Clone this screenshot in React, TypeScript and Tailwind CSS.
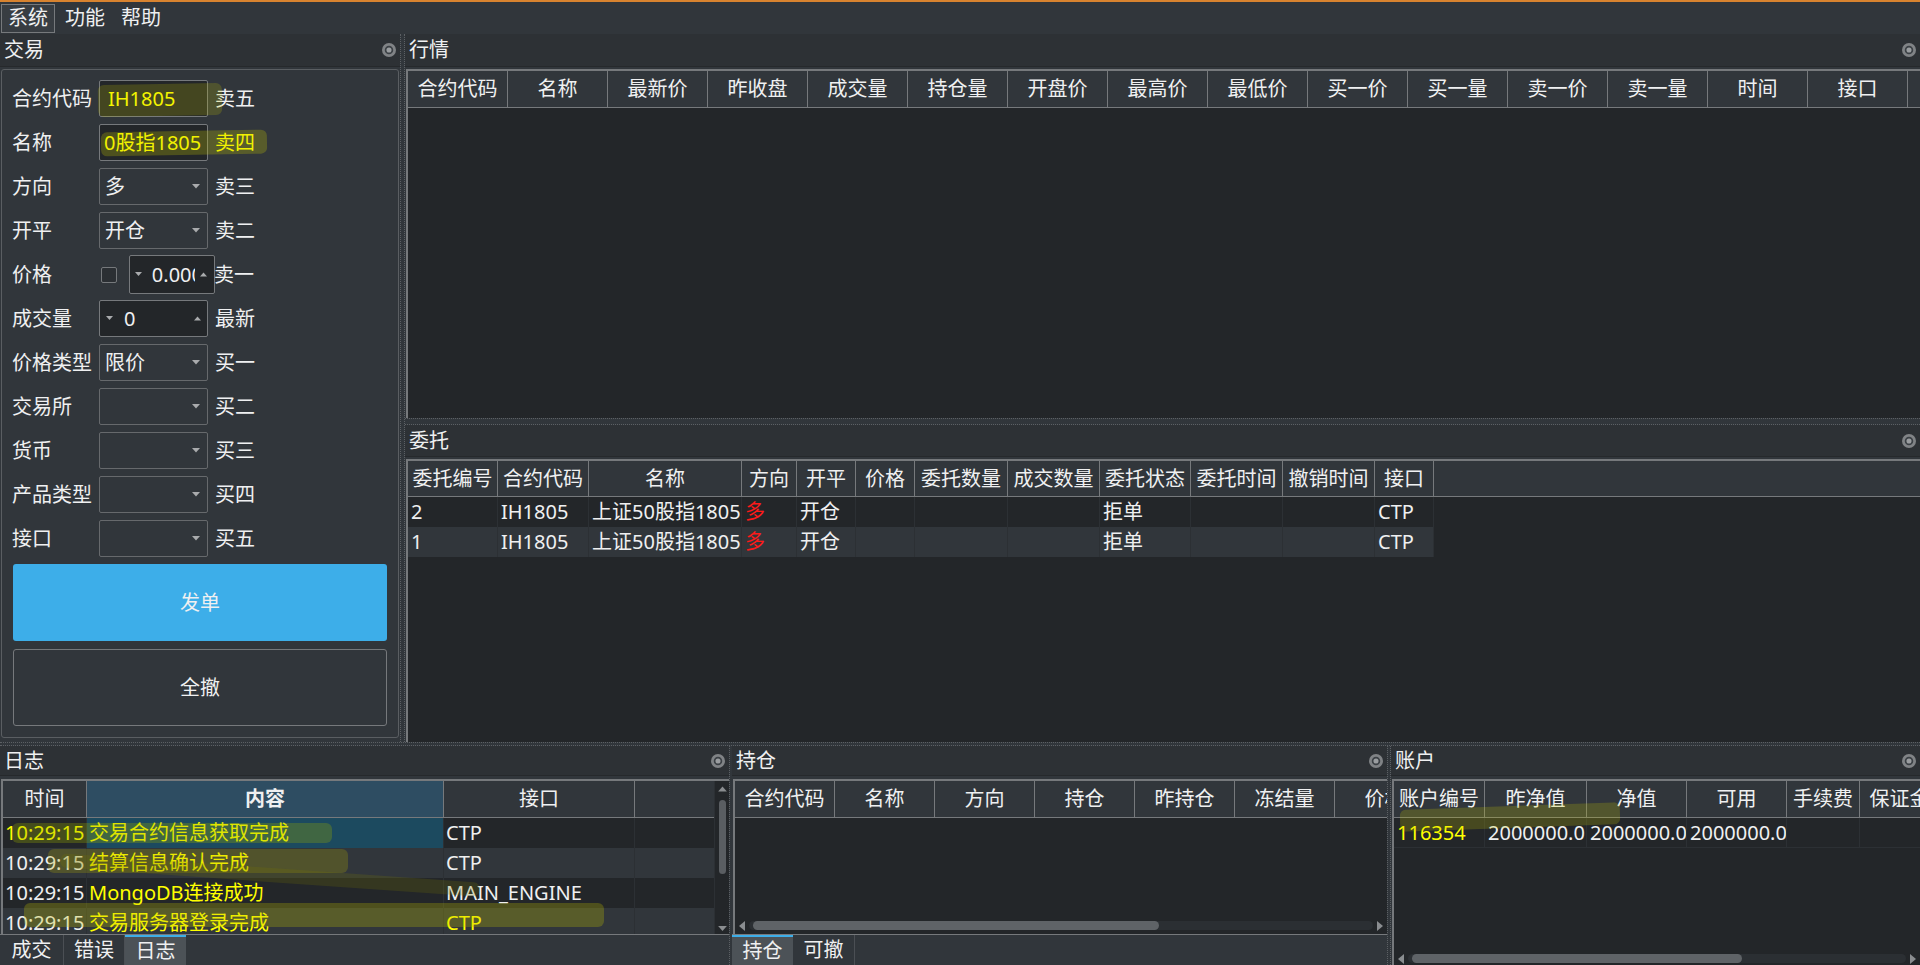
import React from 'react';

const FONT = "font-['Noto_Sans','Noto_Sans_CJK_SC',sans-serif]";

function CloseIcon() {
  return (
    <svg width="14" height="14" viewBox="0 0 14 14" className="shrink-0">
      <circle cx="7" cy="7" r="7" fill="#808386" />
      <circle cx="7" cy="7" r="3.4" fill="#9a9da0" stroke="#3b4045" strokeWidth="1.7" />
    </svg>
  );
}

function Tri({ up = false, size = 8, color = '#a9abad' }: { up?: boolean; size?: number; color?: string }) {
  return (
    <svg width={size} height={size / 2 + 1} viewBox="0 0 8 5" className="shrink-0">
      {up ? <path d="M0 5 L4 0.5 L8 5 Z" fill={color} /> : <path d="M0 0 L8 0 L4 4.5 Z" fill={color} />}
    </svg>
  );
}

function DockTitle({ title, h = 'h-[33px]' }: { title: string; h?: string }) {
  return (
    <div className={`${h} shrink-0 flex items-center justify-between pl-[4px] pr-[4px] bg-[#2d3135] border-b border-[#26292c]`}>
      <span className="leading-none">{title}</span>
      <CloseIcon />
    </div>
  );
}

function HeaderRow({ cols, h = 'h-[38px]', active }: { cols: { t: string; w: number }[]; h?: string; active?: number }) {
  return (
    <div className={`${h} shrink-0 flex bg-[#31363b] border-b border-[#76797c]`}>
      {cols.map((c, i) => (
        <div
          key={i}
          style={{ width: c.w }}
          className={`shrink-0 flex items-center justify-center border-r border-[#76797c] whitespace-nowrap overflow-hidden leading-none ${
            active === i ? 'bg-[#2e4d62] font-bold' : ''
          }`}
        >
          {c.t}
        </div>
      ))}
      <div className="flex-1" />
    </div>
  );
}

function Combo({ value = '' }: { value?: string }) {
  return (
    <div className="w-[109px] h-[37px] flex items-center justify-between pl-[5px] pr-[7px] border border-[#66696c] rounded-[2px] bg-[#31363b]">
      <span className="leading-none">{value}</span>
      <Tri />
    </div>
  );
}

const marketCols = ['合约代码', '名称', '最新价', '昨收盘', '成交量', '持仓量', '开盘价', '最高价', '最低价', '买一价', '买一量', '卖一价', '卖一量', '时间', '接口'].map(t => ({ t, w: 100 }));

const orderWidths = [90, 91, 153, 55, 59, 59, 93, 92, 91, 92, 92, 59];
const orderCols = ['委托编号', '合约代码', '名称', '方向', '开平', '价格', '委托数量', '成交数量', '委托状态', '委托时间', '撤销时间', '接口'].map((t, i) => ({ t, w: orderWidths[i] }));
const orders = [
  ['2', 'IH1805', '上证50股指1805', '多', '开仓', '', '', '', '拒单', '', '', 'CTP'],
  ['1', 'IH1805', '上证50股指1805', '多', '开仓', '', '', '', '拒单', '', '', 'CTP'],
];

const logWidths = [84, 357, 191];
const logCols = [
  { t: '时间', w: 84 },
  { t: '内容', w: 357 },
  { t: '接口', w: 191 },
];
const logs = [
  { time: '10:29:15', msg: '交易合约信息获取完成', gw: 'CTP', timeY: true, gwY: false },
  { time: '10:29:15', msg: '结算信息确认完成', gw: 'CTP', timeY: false, gwY: false },
  { time: '10:29:15', msg: 'MongoDB连接成功', gw: 'MAIN_ENGINE', timeY: false, gwY: false },
  { time: '10:29:15', msg: '交易服务器登录完成', gw: 'CTP', timeY: false, gwY: true },
];

const posCols = ['合约代码', '名称', '方向', '持仓', '昨持仓', '冻结量', '价格'].map(t => ({ t, w: 100 }));

const accWidths = [91, 102, 100, 100, 73, 80];
const accCols = ['账户编号', '昨净值', '净值', '可用', '手续费', '保证金'].map((t, i) => ({ t, w: accWidths[i] }));

const formRows: { label: string; right: string }[] = [
  { label: '合约代码', right: '卖五' },
  { label: '名称', right: '卖四' },
  { label: '方向', right: '卖三' },
  { label: '开平', right: '卖二' },
  { label: '价格', right: '卖一' },
  { label: '成交量', right: '最新' },
  { label: '价格类型', right: '买一' },
  { label: '交易所', right: '买二' },
  { label: '货币', right: '买三' },
  { label: '产品类型', right: '买四' },
  { label: '接口', right: '买五' },
];

function FormField({ i }: { i: number }) {
  if (i === 0)
    return (
      <div className="w-[109px] h-[37px] flex items-center pl-[8px] border border-[#76797c] rounded-[2px] bg-[#232629] text-[#ffff00] leading-none">
        IH1805
      </div>
    );
  if (i === 1)
    return (
      <div className="w-[109px] h-[37px] flex items-center pl-[4px] border border-[#76797c] rounded-[2px] bg-[#232629] text-[#ffff00] leading-none overflow-hidden whitespace-nowrap">
        0股指1805
      </div>
    );
  if (i === 2) return <Combo value="多" />;
  if (i === 3) return <Combo value="开仓" />;
  if (i === 4)
    return (
      <div className="w-[116px] h-[37px] flex items-center">
        <div className="w-[16px] h-[16px] ml-[2px] border border-[#76797c] rounded-[2px] bg-[#2b2f33]" />
        <div className="ml-[12px] w-[87px] h-[39px] flex items-center border border-[#76797c] rounded-[2px] bg-[#232629]">
          <div className="ml-[5px]">
            <Tri size={7} />
          </div>
          <div className="ml-[10px] w-[43px] overflow-hidden whitespace-nowrap leading-none">0.000</div>
          <div className="ml-[5px]">
            <Tri up size={7} />
          </div>
        </div>
      </div>
    );
  if (i === 5)
    return (
      <div className="w-[109px] h-[37px] flex items-center border border-[#76797c] rounded-[2px] bg-[#232629]">
        <div className="ml-[6px]">
          <Tri size={7} />
        </div>
        <div className="ml-[11px] flex-1 leading-none">0</div>
        <div className="mr-[6px]">
          <Tri up size={7} />
        </div>
      </div>
    );
  if (i === 6) return <Combo value="限价" />;
  return <Combo />;
}

function Hl({ cls }: { cls: string }) {
  return <div className={`absolute pointer-events-none rounded-[6px] ${cls}`} />;
}

export default function App() {
  return (
    <div className={`${FONT} relative w-[1920px] h-[965px] overflow-hidden bg-[#31363b] text-[#eff0f1] text-[20px] flex flex-col`}>
      {/* top accent */}
      <div className="h-[2px] shrink-0 bg-[#d8832f]" />

      {/* menu bar */}
      <div className="h-[32px] shrink-0 flex items-center gap-[3px] pl-[1px] bg-[#31363b]">
        <div className="h-[29px] px-[6px] flex items-center border border-[#76797c] bg-[#383d42] leading-none">系统</div>
        <div className="h-[29px] px-[7px] flex items-center leading-none">功能</div>
        <div className="h-[29px] px-[6px] flex items-center leading-none">帮助</div>
      </div>

      {/* main area */}
      <div className="h-[708px] shrink-0 flex">
        {/* trading dock */}
        <div className="w-[400px] shrink-0 flex flex-col">
          <DockTitle title="交易" />
          <div className="mt-[2px] h-[669px] mx-[1px] border border-[#5a5e62] rounded-[3px] flex flex-col pt-[10px] pl-[10px] pr-[11px]">
            <div className="flex flex-col gap-[7px]">
              {formRows.map((r, i) => (
                <div key={i} className="h-[37px] flex items-center">
                  <div className="w-[87px] shrink-0 leading-none whitespace-nowrap">{r.label}</div>
                  <div className="w-[116px] shrink-0">
                    <FormField i={i} />
                  </div>
                  <div className={`leading-none ${i === 4 ? '-ml-[1px]' : ''} ${i === 1 ? 'text-[#ffff00]' : ''}`}>{r.right}</div>
                </div>
              ))}
            </div>
            <div className="mt-[7px] ml-[1px] h-[77px] rounded-[3px] bg-[#3daee9] flex items-center justify-center leading-none">发单</div>
            <div className="mt-[8px] ml-[1px] h-[77px] rounded-[3px] border border-[#76797c] bg-[#31363b] flex items-center justify-center leading-none">全撤</div>
          </div>
        </div>

        {/* vertical splitter */}
        <div className="w-[5px] shrink-0 border-l border-r border-dotted border-[#5c6064]" />

        {/* right column */}
        <div className="flex-1 flex flex-col min-w-0">
          {/* market */}
          <div className="h-[384px] shrink-0 flex flex-col">
            <DockTitle title="行情" />
            <div className="mt-[2px] flex-1 ml-[1px] border-t-2 border-l-2 border-[#76797c] bg-[#232629] overflow-hidden flex flex-col">
              <HeaderRow cols={marketCols} h="h-[37px]" />
            </div>
          </div>
          <div className="h-[7px] shrink-0 border-t border-b border-dotted border-[#5c6064]" />
          {/* orders */}
          <div className="flex-1 flex flex-col min-h-0">
            <DockTitle title="委托" h="h-[32px]" />
            <div className="mt-[2px] flex-1 ml-[1px] border-t-2 border-l-2 border-[#76797c] bg-[#232629] overflow-hidden flex flex-col">
              <HeaderRow cols={orderCols} h="h-[36px]" />
              {orders.map((row, ri) => (
                <div key={ri} className="h-[30px] flex">
                  {row.map((cell, ci) => (
                    <div
                      key={ci}
                      style={{ width: orderWidths[ci] }}
                      className={`shrink-0 flex items-center pl-[3px] whitespace-nowrap overflow-hidden leading-none border-r border-[#2c3034] ${
                        ri === 1 ? 'bg-[#31363b]' : 'bg-[#232629]'
                      } ${ci === 3 ? 'text-[#ff1a1a]' : ''}`}
                    >
                      {cell}
                    </div>
                  ))}
                </div>
              ))}
            </div>
          </div>
        </div>
      </div>

      {/* horizontal splitter */}
      <div className="h-[4px] shrink-0 border-t border-b border-dotted border-[#5c6064]" />

      {/* bottom docks */}
      <div className="flex-1 flex min-h-0">
        {/* log */}
        <div className="w-[729px] shrink-0 flex flex-col">
          <DockTitle title="日志" h="h-[30px]" />
          <div className="mt-[3px] h-[155px] shrink-0 ml-[1px] border-t-2 border-l-2 border-[#76797c] bg-[#232629] overflow-hidden flex">
            <div className="flex-1 flex flex-col min-w-0">
              <HeaderRow cols={logCols} h="h-[37px]" active={1} />
              {logs.map((l, i) => (
                <div key={i} className="h-[30px] shrink-0 flex">
                  {[l.time, l.msg, l.gw].map((cell, ci) => (
                    <div
                      key={ci}
                      style={{ width: logWidths[ci] }}
                      className={`shrink-0 flex items-center pl-[2px] whitespace-nowrap overflow-hidden leading-none border-r border-[#2c3034] ${
                        i === 0 && ci === 1 ? 'bg-[#1c4a5f]' : i % 2 === 1 ? 'bg-[#31363b]' : 'bg-[#232629]'
                      } ${
                        (ci === 0 && l.timeY) || ci === 1 || (ci === 2 && l.gwY) ? 'text-[#ffff00]' : ''
                      }`}
                    >
                      {cell}
                    </div>
                  ))}
                  <div className={`flex-1 ${i % 2 === 1 ? 'bg-[#31363b]' : 'bg-[#232629]'}`} />
                </div>
              ))}
            </div>
            {/* vertical scrollbar */}
            <div className="w-[15px] shrink-0 bg-[#232629] flex flex-col items-center pt-[5px] pb-[3px] border-l border-[#2c3034]">
              <Tri up size={9} color="#8a8d90" />
              <div className="mt-[8px] w-[7px] h-[74px] rounded-full bg-[#5a5e62]" />
              <div className="flex-1" />
              <Tri size={9} color="#8a8d90" />
            </div>
          </div>
          <div className="flex-1 flex border-t border-[#76797c]">
            <div className="w-[64px] flex items-center justify-center border-r border-[#4b4f54] leading-none">成交</div>
            <div className="w-[61px] flex items-center justify-center border-r border-[#4b4f54] leading-none">错误</div>
            <div className="w-[61px] flex items-center justify-center border-t-2 border-[#3daee9] bg-[#4c5257] leading-none">日志</div>
          </div>
        </div>

        <div className="w-[3px] shrink-0 border-l border-dotted border-[#5c6064]" />

        {/* positions */}
        <div className="w-[655px] shrink-0 flex flex-col">
          <DockTitle title="持仓" h="h-[30px]" />
          <div className="mt-[3px] h-[155px] shrink-0 ml-[1px] border-t-2 border-l-2 border-[#76797c] bg-[#232629] overflow-hidden flex flex-col">
            <HeaderRow cols={posCols} h="h-[37px]" />
            <div className="flex-1" />
            <div className="h-[15px] shrink-0 flex items-center px-[4px] gap-[4px] mb-[1px]">
              <svg width="6" height="10" viewBox="0 0 6 10"><path d="M6 0 L0 5 L6 10 Z" fill="#8a8d90" /></svg>
              <div className="flex-1 h-[9px] rounded-full bg-[#2b2f33] relative">
                <div className="absolute left-[4px] top-0 h-[9px] w-[406px] rounded-full bg-[#5f6367]" />
              </div>
              <svg width="6" height="10" viewBox="0 0 6 10"><path d="M0 0 L6 5 L0 10 Z" fill="#8a8d90" /></svg>
            </div>
          </div>
          <div className="flex-1 flex border-t border-[#76797c]">
            <div className="w-[61px] flex items-center justify-center border-t-2 border-[#3daee9] bg-[#4c5257] leading-none">持仓</div>
            <div className="w-[62px] flex items-center justify-center border-r border-[#4b4f54] leading-none">可撤</div>
          </div>
        </div>

        <div className="w-[4px] shrink-0 border-l border-r border-dotted border-[#5c6064]" />

        {/* account */}
        <div className="flex-1 flex flex-col min-w-0">
          <DockTitle title="账户" h="h-[30px]" />
          <div className="mt-[3px] flex-1 ml-[1px] border-t-2 border-l-2 border-[#76797c] bg-[#232629] overflow-hidden flex flex-col">
            <HeaderRow cols={accCols} h="h-[37px]" />
            <div className="h-[30px] shrink-0 flex border-b border-[#2c3034]">
              {['116354', '2000000.0', '2000000.0', '2000000.0', '', ''].map((cell, ci) => (
                <div
                  key={ci}
                  style={{ width: accWidths[ci] }}
                  className={`shrink-0 flex items-center pl-[3px] whitespace-nowrap overflow-hidden leading-none border-r border-[#2c3034] ${
                    ci === 0 ? 'text-[#ffff00]' : ''
                  }`}
                >
                  {cell}
                </div>
              ))}
            </div>
            <div className="flex-1" />
            <div className="h-[13px] shrink-0 flex items-center px-[4px] gap-[4px]">
              <svg width="6" height="10" viewBox="0 0 6 10"><path d="M6 0 L0 5 L6 10 Z" fill="#8a8d90" /></svg>
              <div className="flex-1 h-[9px] rounded-full bg-[#2b2f33] relative">
                <div className="absolute left-[4px] top-0 h-[9px] w-[330px] rounded-full bg-[#5f6367]" />
              </div>
              <svg width="6" height="10" viewBox="0 0 6 10"><path d="M0 0 L6 5 L0 10 Z" fill="#8a8d90" /></svg>
            </div>
          </div>
        </div>
      </div>

      {/* highlighter marks drawn over the screenshot */}
      <Hl cls="left-[98px] top-[84px] w-[124px] h-[32px] -rotate-1 bg-[rgba(200,200,0,0.2)]" />
      <Hl cls="left-[101px] top-[131px] w-[166px] h-[24px] -rotate-1 bg-[rgba(200,200,0,0.26)]" />
      <Hl cls="left-[12px] top-[823px] w-[320px] h-[20px] bg-[rgba(150,170,0,0.3)]" />
      <Hl cls="left-[48px] top-[849px] w-[300px] h-[24px] bg-[rgba(180,170,0,0.25)]" />
      <Hl cls="left-[60px] top-[868px] w-[420px] h-[14px] rotate-[4deg] bg-[rgba(120,120,0,0.22)]" />
      <Hl cls="left-[24px] top-[903px] w-[580px] h-[24px] bg-[rgba(190,190,0,0.28)]" />
      <Hl cls="left-[1400px] top-[806px] w-[220px] h-[22px] -rotate-2 bg-[rgba(200,200,0,0.22)]" />
    </div>
  );
}
